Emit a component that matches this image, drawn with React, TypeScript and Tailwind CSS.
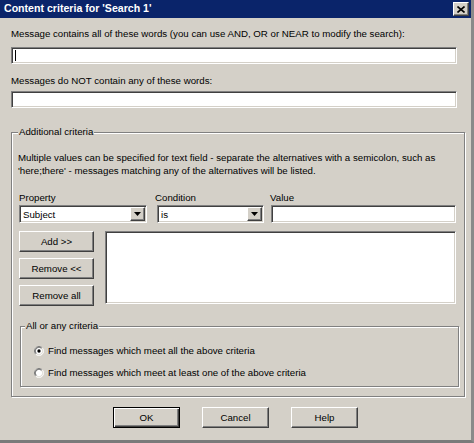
import type { ReactNode } from "react";

const sunken =
  "bg-white border border-t-[#808080] border-l-[#808080] border-r-white border-b-white shadow-[inset_1px_1px_0_#404040,inset_-1px_-1px_0_#d4d0c8]";
const raised =
  "bg-[#d4d0c8] border border-t-white border-l-white border-r-[#404040] border-b-[#404040] shadow-[inset_-1px_-1px_0_#808080]";
const etched = "border border-[#808080] shadow-[inset_1px_1px_0_white,1px_1px_0_white]";

function Radio({ checked }: { checked?: boolean }) {
  return (
    <svg width="10" height="10" viewBox="0 0 12 12" className="shrink-0">
      <circle cx="6" cy="6" r="5.5" fill="white" />
      <path d="M9.9 2.1 A5.5 5.5 0 0 0 2.1 9.9" stroke="#808080" fill="none" />
      <path d="M9.9 2.1 A5.5 5.5 0 0 1 2.1 9.9" stroke="white" fill="none" />
      <path d="M9.2 2.8 A4.5 4.5 0 0 0 2.8 9.2" stroke="#404040" fill="none" />
      <path d="M9.2 2.8 A4.5 4.5 0 0 1 2.8 9.2" stroke="#d4d0c8" fill="none" />
      {checked && <circle cx="6" cy="6" r="2" fill="black" />}
    </svg>
  );
}

function Combo({ value, width }: { value: string; width: string }) {
  return (
    <div className={`${sunken} ${width} h-[18px] flex items-center p-px`}>
      <span className="flex-1 pl-[2px] leading-[13px]">{value}</span>
      <div className={`${raised} w-[15px] h-[14px] flex items-center justify-center`}>
        <svg width="7" height="4" viewBox="0 0 7 4">
          <polygon points="0,0 7,0 3.5,4" fill="black" />
        </svg>
      </div>
    </div>
  );
}

function Btn({ children, width }: { children: ReactNode; width: string }) {
  return (
    <div className={`${raised} ${width} h-[21px] flex items-center justify-center leading-[13px]`}>
      {children}
    </div>
  );
}

function Legend({ children, pos }: { children: ReactNode; pos: string }) {
  return <span className={`absolute ${pos} px-px bg-[#d4d0c8] leading-[13px]`}>{children}</span>;
}

export default function App() {
  return (
    <div className="w-[474px] h-[443px] bg-[#d4d0c8] flex flex-col border-r-[3px] border-b-[3px] border-r-[#8a8a8a] border-b-[#7a7a7a] font-['Liberation_Sans',Arial,sans-serif] text-[9.7px] text-black">
      {/* Title bar */}
      <div className="h-[18px] bg-[#0a246a] flex items-center justify-between pl-[4px] pr-[2px]">
        <span className="text-white font-bold text-[10.6px]">Content criteria for 'Search 1'</span>
        <div className={`${raised} w-[16px] h-[14px] flex items-center justify-center`}>
          <svg width="8" height="7" viewBox="0 0 8 7">
            <path d="M0.5 0.5 L7.5 6.5 M7.5 0.5 L0.5 6.5" stroke="black" strokeWidth="1.6" />
          </svg>
        </div>
      </div>

      <div className="flex flex-col pl-[11px]">
        <div className="mt-[9px] leading-[13px]">
          Message contains all of these words (you can use AND, OR or NEAR to modify the search):
        </div>
        <div className={`${sunken} mt-[7px] w-[446px] h-[17px] flex items-center pl-[3px]`}>
          <div className="w-px h-[11px] bg-black" />
        </div>
        <div className="mt-[10px] leading-[13px]">Messages do NOT contain any of these words:</div>
        <div className={`${sunken} mt-[4px] w-[446px] h-[17px]`} />

        {/* Additional criteria */}
        <div className={`${etched} relative mt-[24px] w-[454px] h-[265px] flex flex-col pl-[7px] pt-[18px]`}>
          <Legend pos="left-[6px] top-[-8px]">Additional criteria</Legend>
          <div className="-ml-px leading-[13px] whitespace-nowrap">
            Multiple values can be specified for text field - separate the alternatives with a semicolon, such as
            <br />
            'here;there' - messages matching any of the alternatives will be listed.
          </div>

          <div className="mt-[14px] flex leading-[13px]">
            <span className="w-[136px]">Property</span>
            <span className="w-[115px]">Condition</span>
            <span>Value</span>
          </div>
          <div className="mt-px flex">
            <Combo value="Subject" width="w-[128px]" />
            <div className="ml-[10px]">
              <Combo value="is" width="w-[107px]" />
            </div>
            <div className={`${sunken} ml-[7px] w-[185px] h-[18px]`} />
          </div>

          <div className="mt-[8px] flex">
            <div className="flex flex-col gap-[6px]">
              <Btn width="w-[75px]">Add &gt;&gt;</Btn>
              <Btn width="w-[75px]">Remove &lt;&lt;</Btn>
              <Btn width="w-[75px]">Remove all</Btn>
            </div>
            <div className={`${sunken} ml-[11px] w-[351px] h-[73px]`} />
          </div>

          {/* All or any criteria */}
          <div className={`${etched} relative mt-[20px] ml-px w-[439px] h-[61px] flex flex-col pl-[13px] pt-[17px]`}>
            <Legend pos="left-[4px] top-[-8px]">All or any criteria</Legend>
            <div className="flex items-center gap-[4px] leading-[13px]">
              <Radio checked />
              <span>Find messages which meet all the above criteria</span>
            </div>
            <div className="mt-[9px] flex items-center gap-[4px] leading-[13px]">
              <Radio />
              <span>Find messages which meet at least one of the above criteria</span>
            </div>
          </div>
        </div>
      </div>

      {/* Dialog buttons */}
      <div className="mt-[10px] flex justify-center gap-[22px]">
        <div className="w-[67px] h-[21px] border border-black bg-[#d4d0c8] flex items-center justify-center leading-[13px] shadow-[inset_1px_1px_0_white,inset_-1px_-1px_0_#404040,inset_-2px_-2px_0_#808080]">
          OK
        </div>
        <Btn width="w-[67px]">Cancel</Btn>
        <Btn width="w-[67px]">Help</Btn>
      </div>
    </div>
  );
}
